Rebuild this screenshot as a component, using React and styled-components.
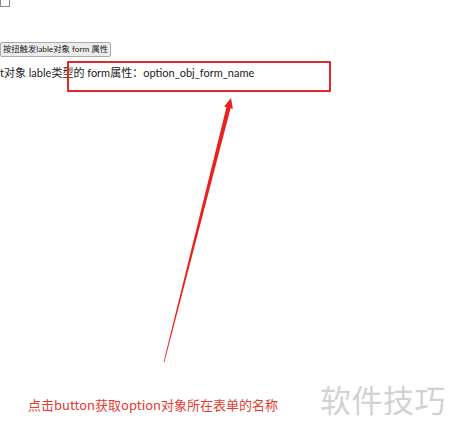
import styled, { createGlobalStyle } from "styled-components";

const GlobalStyle = createGlobalStyle`
  body {
    margin: 0;
    background: #ffffff;
  }
`;

const App = () => {
  return (
    <>
      <GlobalStyle />
      <Page>
        <OptionStub aria-hidden="true" />
        <TriggerButton type="button">按扭触发lable对象 form 属性</TriggerButton>
        <ResultLine>t对象 lable类型的 form属性：option_obj_form_name</ResultLine>

        <Footer>
          <Caption>点击button获取option对象所在表单的名称</Caption>
          <Watermark>软件技巧</Watermark>
        </Footer>

        {/* annotation overlay */}
        <Highlight aria-hidden="true" />
        <ArrowLayer viewBox="0 0 450 435" aria-hidden="true">
          <polygon
            points="163.6,361.9 226.4,107.2 224.2,106.6 231,98 232.9,108.8 230.6,108.2 164.4,362.1"
            fill="#e8231d"
          />
        </ArrowLayer>
      </Page>
    </>
  );
};

export default App;

const Page = styled.div`
  position: relative;
  width: 450px;
  height: 435px;
  overflow: hidden;
  display: flex;
  flex-direction: column;
  align-items: flex-start;
  font-family: Lato, "Noto Sans CJK SC", sans-serif;
  color: #222;
`;

const OptionStub = styled.div`
  width: 8px;
  height: 7px;
  margin-top: -1px;
  border: 1px solid #8a8a8a;
  border-top: none;
  background: #fff;
`;

const TriggerButton = styled.button`
  margin-top: 35px;
  height: 15px;
  padding: 0 2px;
  font-family: Lato, "Noto Sans CJK SC", sans-serif;
  font-size: 8.3px;
  line-height: 13px;
  color: #222;
  background: #ececec;
  border: 1px solid #a9a9a9;
  border-radius: 2px;
`;

const ResultLine = styled.div`
  margin-top: 8px;
  font-size: 11px;
  line-height: 16px;
  white-space: nowrap;
`;

const Footer = styled.div`
  margin-top: auto;
  width: 100%;
  box-sizing: border-box;
  display: flex;
  align-items: center;
  justify-content: space-between;
  padding: 0 4px 17px 28px;
`;

const Caption = styled.div`
  font-family: "Noto Sans CJK SC", sans-serif;
  font-size: 13px;
  line-height: 18px;
  color: #e23c32;
  margin-top: 12px;
`;

const Watermark = styled.div`
  font-family: "Noto Sans CJK SC", sans-serif;
  font-size: 31px;
  line-height: 38px;
  color: #d2d2d2;
  letter-spacing: 0.5px;
`;

const Highlight = styled.div`
  position: absolute;
  left: 67px;
  top: 61px;
  width: 260px;
  height: 27px;
  border: 2px solid #e3262a;
  border-radius: 1px;
`;

const ArrowLayer = styled.svg`
  position: absolute;
  left: 0;
  top: 0;
  width: 450px;
  height: 435px;
  pointer-events: none;
`;
